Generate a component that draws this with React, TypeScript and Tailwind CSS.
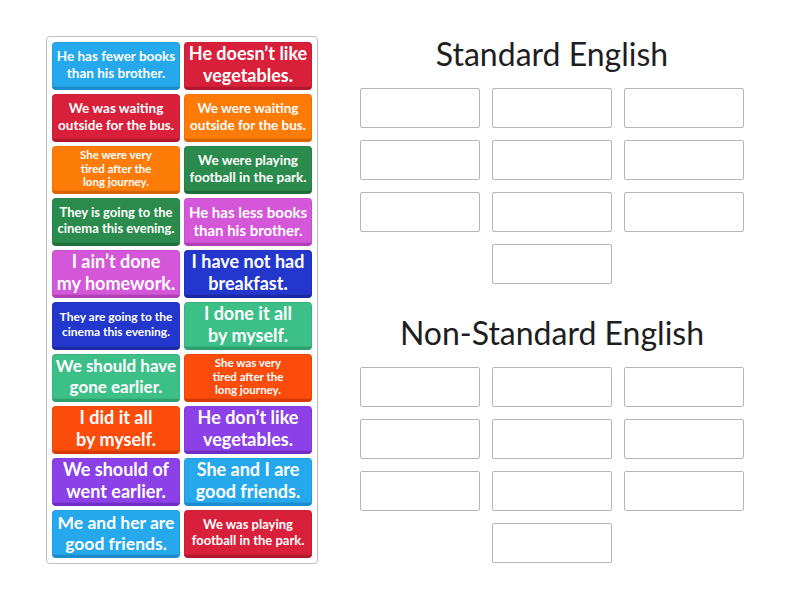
import React from "react";

type Tile = { lines: string[]; c: string; size: string };

const C = {
  blue: "bg-[#25a8ec] border-[#1a8ccd]",
  red: "bg-[#d8203b] border-[#b3172d]",
  orange: "bg-[#fd7c08] border-[#d96400]",
  green: "bg-[#2a8b4c] border-[#1f6f3b]",
  pink: "bg-[#d457d9] border-[#b23fb7]",
  navy: "bg-[#2437cc] border-[#1a28a6]",
  mint: "bg-[#3dbf88] border-[#2da06f]",
  redorange: "bg-[#fb4c0c] border-[#d63a04]",
  purple: "bg-[#8b40e8] border-[#6f2cc6]",
};

const S = "text-[13.5px] leading-[16.2px]";
const L = "text-[18px] leading-[21.6px]";
const XS = "text-[11.5px] leading-[13.8px]";

const tiles: Tile[] = [
  { lines: ["He has fewer books", "than his brother."], c: C.blue, size: S },
  { lines: ["He doesn’t like", "vegetables."], c: C.red, size: L },
  { lines: ["We was waiting", "outside for the bus."], c: C.red, size: S },
  { lines: ["We were waiting", "outside for the bus."], c: C.orange, size: S },
  { lines: ["She were very", "tired after the", "long journey."], c: C.orange, size: XS },
  { lines: ["We were playing", "football in the park."], c: C.green, size: S },
  { lines: ["They is going to the", "cinema this evening."], c: C.green, size: "text-[13px] leading-[15.6px]" },
  { lines: ["He has less books", "than his brother."], c: C.pink, size: "text-[15px] leading-[18px]" },
  { lines: ["I ain’t done", "my homework."], c: C.pink, size: L },
  { lines: ["I have not had", "breakfast."], c: C.navy, size: L },
  { lines: ["They are going to the", "cinema this evening."], c: C.navy, size: "text-[12px] leading-[14.4px]" },
  { lines: ["I done it all", "by myself."], c: C.mint, size: L },
  { lines: ["We should have", "gone earlier."], c: C.mint, size: "text-[17px] leading-[20.4px]" },
  { lines: ["She was very", "tired after the", "long journey."], c: C.redorange, size: XS },
  { lines: ["I did it all", "by myself."], c: C.redorange, size: L },
  { lines: ["He don’t like", "vegetables."], c: C.purple, size: L },
  { lines: ["We should of", "went earlier."], c: C.purple, size: L },
  { lines: ["She and I are", "good friends."], c: C.blue, size: L },
  { lines: ["Me and her are", "good friends."], c: C.blue, size: "text-[17.5px] leading-[21px]" },
  { lines: ["We was playing", "football in the park."], c: C.red, size: "text-[13px] leading-[15.6px]" },
];

function Box({ className = "" }: { className?: string }) {
  return <div className={"h-[40px] w-[120px] border border-[#b5b5b5] rounded-[2px] bg-white " + className} />;
}

function Group({ title }: { title: string }) {
  return (
    <div className="flex flex-col items-center">
      <div className="text-[32px] leading-[38px] text-[#1e1e1e] font-normal">{title}</div>
      <div className="grid grid-cols-[120px_120px_120px] gap-[12px] mt-[15px]">
        <Box />
        <Box />
        <Box />
        <Box />
        <Box />
        <Box />
        <Box />
        <Box />
        <Box />
        <Box className="col-start-2" />
      </div>
    </div>
  );
}

export default function App() {
  return (
    <div className="w-[800px] h-[600px] bg-white flex" style={{ fontFamily: "Lato, 'Open Sans', sans-serif" }}>
      <div className="ml-[46px] mt-[36px] w-[272px] h-[528px] border border-[#bdbdbd] rounded-[4px] p-[5px]">
        <div className="grid grid-cols-[128px_128px] auto-rows-[48px] gap-[4px]">
          {tiles.map((t, i) => (
            <div
              key={i}
              className={
                "flex flex-col items-center justify-center text-center text-white font-bold rounded-[4px] border-b-[3px] whitespace-nowrap shadow-[inset_0_0_0_1px_rgba(0,0,0,0.06)] " +
                t.c +
                " " +
                t.size
              }
            >
              {t.lines.map((l, j) => (
                <span key={j}>{l}</span>
              ))}
            </div>
          ))}
        </div>
      </div>
      <div className="ml-[42px] w-[384px] flex flex-col">
        <div className="mt-[35px]">
          <Group title="Standard English" />
        </div>
        <div className="mt-[30px]">
          <Group title="Non-Standard English" />
        </div>
      </div>
    </div>
  );
}
